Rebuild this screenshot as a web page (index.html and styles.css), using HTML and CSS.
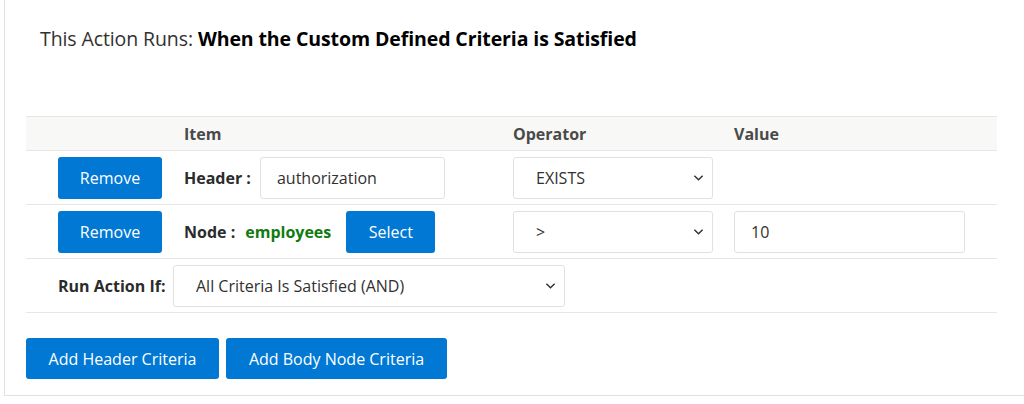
FILE: index.html
```html
<!DOCTYPE html>
<html>
<head>
<meta charset="utf-8">
<link rel="stylesheet" href="styles.css">
</head>
<body>
<div class="panel">
  <div class="title">This Action Runs: <b>When the Custom Defined Criteria is Satisfied</b></div>
  <div class="criteria">
    <div class="row head">
      <div class="cell c1"></div>
      <div class="cell c2">Item</div>
      <div class="cell c3">Operator</div>
      <div class="cell c4">Value</div>
    </div>
    <div class="row">
      <div class="cell c1"><button class="btn remove">Remove</button></div>
      <div class="cell c2"><span class="lbl">Header :</span><div class="input hdr">authorization</div></div>
      <div class="cell c3"><div class="select op"><span>EXISTS</span><svg class="chev" viewBox="0 0 12 8"><path d="M1.5 1.5 6 6l4.5-4.5" fill="none" stroke="#333" stroke-width="1.6"/></svg></div></div>
      <div class="cell c4"></div>
    </div>
    <div class="row">
      <div class="cell c1"><button class="btn remove">Remove</button></div>
      <div class="cell c2"><span class="lbl">Node :</span><span class="node">employees</span><button class="btn sel">Select</button></div>
      <div class="cell c3"><div class="select op"><span>&gt;</span><svg class="chev" viewBox="0 0 12 8"><path d="M1.5 1.5 6 6l4.5-4.5" fill="none" stroke="#333" stroke-width="1.6"/></svg></div></div>
      <div class="cell c4"><div class="input val">10</div></div>
    </div>
    <div class="row runif">
      <span class="lbl runlbl">Run Action If:</span>
      <div class="select mode"><span>All Criteria Is Satisfied (AND)</span><svg class="chev" viewBox="0 0 12 8"><path d="M1.5 1.5 6 6l4.5-4.5" fill="none" stroke="#333" stroke-width="1.6"/></svg></div>
    </div>
  </div>
  <div class="actions">
    <button class="btn add add-h">Add Header Criteria</button>
    <button class="btn add add-b">Add Body Node Criteria</button>
  </div>
</div>
</body>
</html>
```
FILE: styles.css
```css
html, body {
  margin: 0;
  padding: 0;
  background: #fff;
  font-family: "Open Sans", "Noto Sans", sans-serif;
  color: #323130;
}
.panel {
  margin-left: 4px;
  width: 1013px;
  height: 395px;
  border-left: 1px solid #e1e1e1;
  border-right: 1px solid #e1e1e1;
  border-bottom: 1px solid #e1e1e1;
  padding-left: 21px;
  box-sizing: content-box;
}
.title {
  padding-top: 26px;
  padding-left: 14px;
  font-size: 19.5px;
  line-height: 26px;
  color: #323130;
  height: 90px;
  letter-spacing: -0.1px;
}
.title b {
  color: #000;
  font-weight: 700;
}
.criteria {
  width: 971px;
  font-size: 16px;
}
.row {
  display: grid;
  grid-template-columns: 146px 329px 221px 1fr;
  border-bottom: 1px solid #e6e6e6;
  height: 53px;
  align-items: center;
}
.row.head {
  background: #f8f8f6;
  border-top: 1px solid #e6e6e6;
  height: 33px;
  font-weight: 700;
  color: #4a4a4a;
}
.cell {
  display: flex;
  align-items: center;
  padding-left: 12px;
}
.cell.c1 {
  padding-left: 32px;
}
.btn {
  background: #0078d4;
  color: #fff;
  border: none;
  border-radius: 3px;
  font-family: inherit;
  font-size: 16px;
  height: 42px;
  padding: 0;
}
.remove {
  width: 104px;
}
.lbl {
  font-weight: 700;
  color: #2b2b2b;
}
.hdr {
  margin-left: 9px;
  width: 185px;
}
.input, .select {
  height: 42px;
  box-sizing: border-box;
  border: 1px solid #e1e1e1;
  border-radius: 3px;
  display: flex;
  align-items: center;
  padding-left: 16px;
  color: #323130;
  background: #fff;
}
.select {
  padding-left: 22px;
  padding-right: 8px;
  justify-content: space-between;
}
.op {
  width: 200px;
}
.val {
  width: 231px;
}
.chev {
  width: 11px;
  height: 8px;
}
.node {
  color: #107c10;
  font-weight: 700;
  margin-left: 10px;
}
.sel {
  width: 89px;
  margin-left: 15px;
}
.runif {
  display: flex;
  padding-left: 32px;
}
.runlbl {
  width: 111px;
}
.mode {
  width: 392px;
  margin-left: 4px;
}
.actions {
  display: flex;
  gap: 7px;
  padding-top: 25px;
}
.add {
  height: 41px;
}
.add-h {
  width: 193px;
}
.add-b {
  width: 221px;
}
```
